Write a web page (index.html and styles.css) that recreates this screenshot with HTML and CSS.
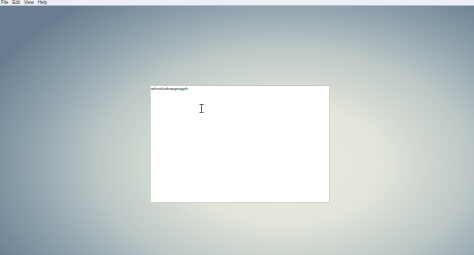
FILE: index.html
```html
<!DOCTYPE html>
<html>
<head>
<meta charset="utf-8">
<link rel="stylesheet" href="styles.css">
</head>
<body>
<div class="menubar">
  <span class="menu-item">File</span>
  <span class="menu-item">Edit</span>
  <span class="menu-item">View</span>
  <span class="menu-item">Help</span>
</div>
<div class="desktop">
  <div class="editor">
    <div class="editor-text">wheelsahowprayph</div>
    <svg class="ibeam" width="5" height="9" viewBox="0 0 5 9">
      <path d="M0.5 0.5h4M0.5 8.5h4M2.5 0.5v8" stroke="#666" stroke-width="1" fill="none"/>
    </svg>
  </div>
</div>
</body>
</html>
```
FILE: styles.css
```css
html, body {
  margin: 0;
  padding: 0;
}
body {
  width: 474px;
  height: 255px;
  overflow: hidden;
  font-family: "Liberation Sans", Arial, sans-serif;
  background: radial-gradient(ellipse 68% 78% at 60% 64%, #eaebe0 0%, #e2e5da 30%, #bcc7c6 58%, #8b9eaa 82%, #687e90 102%);
}
.menubar {
  height: 5px;
  background: #eeeff6;
  border-bottom: 1px solid #b8bccb;
  display: flex;
  align-items: center;
  gap: 4px;
  padding-left: 1px;
  font-size: 4.5px;
  line-height: 5px;
  color: #333;
}
.desktop {
  padding-top: 79px;
  padding-left: 150px;
}
.editor {
  position: relative;
  width: 178px;
  height: 116px;
  background: #fff;
  border: 1px solid #d4d6cc;
  border-top-color: #c8cac0;
}
.editor-text {
  font-size: 4.3px;
  line-height: 6px;
  padding-left: 0;
  color: #222;
}
.ibeam {
  position: absolute;
  left: 48px;
  top: 18px;
}
```
